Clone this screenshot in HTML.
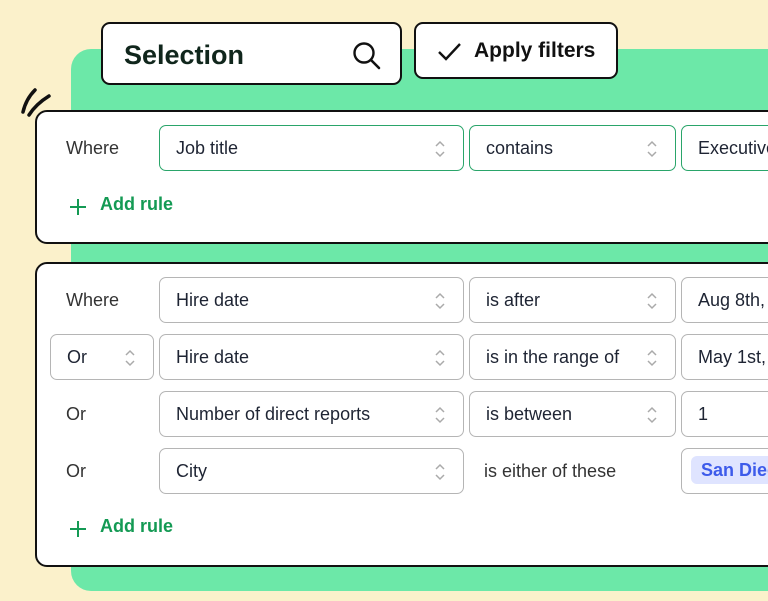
<!DOCTYPE html><html><head><style>
body{margin:0;width:768px;height:601px;overflow:hidden;background:#fbf1cb;font-family:"Liberation Sans",sans-serif;position:relative;color:#1e2433}
.a{position:absolute;box-sizing:border-box}
.green{left:71px;top:49px;width:760px;height:542px;background:#6ce8a8;border-radius:20px}
.card{background:#fff;border:2px solid #111;border-radius:12px}
.f{position:absolute;box-sizing:border-box;height:46px;border:1.5px solid #b5b5b5;border-radius:7px;background:#fff;font-size:18px;line-height:44px;padding-left:16px}
.g{border-color:#2aa56a}
.l{position:absolute;font-size:18px;color:#333}
.ch{position:absolute;right:17px;top:13px}
.add{position:absolute;color:#149a54;font-weight:bold;font-size:18px}
.add svg{position:absolute;left:0;top:3px}
.add span{position:absolute;left:32px;top:0;white-space:nowrap}
</style></head><body>
<svg width="0" height="0" style="position:absolute"><defs><symbol id="chv" viewBox="0 0 12 20"><path d="M2 7 L6 3 L10 7 M2 13 L6 17 L10 13" stroke="#aaa" stroke-width="1.5" fill="none"/></symbol></defs></svg>
<div class="a green"></div>
<svg class="a" style="left:18px;top:86px" width="36" height="34"><path d="M5 26 Q8 13 17 4" stroke="#111" stroke-width="3.5" fill="none" stroke-linecap="round"/><path d="M11 29 Q18 18 31 10" stroke="#111" stroke-width="3.5" fill="none" stroke-linecap="round"/></svg>
<div class="a card" style="left:101px;top:22px;width:301px;height:63px;border-radius:9px"><span style="position:absolute;left:21px;top:16px;font-size:27px;font-weight:bold;color:#10261c">Selection</span>
<svg style="position:absolute;right:18px;top:17px" width="30" height="30"><circle cx="12" cy="12" r="9.5" stroke="#111" stroke-width="2.4" fill="none"/><path d="M19 19 L27 27" stroke="#111" stroke-width="2.6" stroke-linecap="round"/></svg></div>
<div class="a card" style="left:414px;top:22px;width:204px;height:57px;border-radius:9px"><svg style="position:absolute;left:21px;top:17px" width="26" height="22"><path d="M2 11 L9 18 L23 3" stroke="#111" stroke-width="2.4" fill="none"/></svg><span style="position:absolute;left:58px;top:15px;font-size:21px;font-weight:bold;color:#111">Apply filters</span></div>
<div class="a card" style="left:35px;top:110px;width:760px;height:134px"></div>
<div class="a card" style="left:35px;top:262px;width:760px;height:305px"></div>
<span class="l" style="left:66px;top:138px">Where</span>
<div class="f g" style="left:159px;top:125px;width:305px">Job title<svg class="ch" width="12" height="20"><use href="#chv"/></svg></div>
<div class="f g" style="left:469px;top:125px;width:207px">contains<svg class="ch" width="12" height="20"><use href="#chv"/></svg></div>
<div class="f g" style="left:681px;top:125px;width:120px">Executive</div>
<div class="add" style="left:68px;top:194px"><svg width="20" height="20"><path d="M10 2 V18 M2 10 H18" stroke="#149a54" stroke-width="2"/></svg><span>Add rule</span></div>

<span class="l" style="left:66px;top:290px">Where</span>
<div class="f" style="left:159px;top:277px;width:305px">Hire date<svg class="ch" width="12" height="20"><use href="#chv"/></svg></div>
<div class="f" style="left:469px;top:277px;width:207px">is after<svg class="ch" width="12" height="20"><use href="#chv"/></svg></div>
<div class="f" style="left:681px;top:277px;width:120px">Aug 8th,</div>

<div class="f" style="left:50px;top:334px;width:104px">Or<svg class="ch" width="12" height="20"><use href="#chv"/></svg></div>
<div class="f" style="left:159px;top:334px;width:305px">Hire date<svg class="ch" width="12" height="20"><use href="#chv"/></svg></div>
<div class="f" style="left:469px;top:334px;width:207px">is in the range of<svg class="ch" width="12" height="20"><use href="#chv"/></svg></div>
<div class="f" style="left:681px;top:334px;width:120px">May 1st,</div>

<span class="l" style="left:66px;top:404px">Or</span>
<div class="f" style="left:159px;top:391px;width:305px">Number of direct reports<svg class="ch" width="12" height="20"><use href="#chv"/></svg></div>
<div class="f" style="left:469px;top:391px;width:207px">is between<svg class="ch" width="12" height="20"><use href="#chv"/></svg></div>
<div class="f" style="left:681px;top:391px;width:120px">1</div>

<span class="l" style="left:66px;top:461px">Or</span>
<div class="f" style="left:159px;top:448px;width:305px">City<svg class="ch" width="12" height="20"><use href="#chv"/></svg></div>
<span class="l" style="left:484px;top:461px">is either of these</span>
<div class="f" style="left:681px;top:448px;width:120px;padding-left:9px"><span style="display:inline-block;background:#dfe4ff;color:#3d5bea;font-weight:bold;border-radius:6px;line-height:28px;padding:0 10px;margin-top:7px;vertical-align:top">San Diego</span></div>
<div class="add" style="left:68px;top:516px"><svg width="20" height="20"><path d="M10 2 V18 M2 10 H18" stroke="#149a54" stroke-width="2"/></svg><span>Add rule</span></div>
</body></html>
